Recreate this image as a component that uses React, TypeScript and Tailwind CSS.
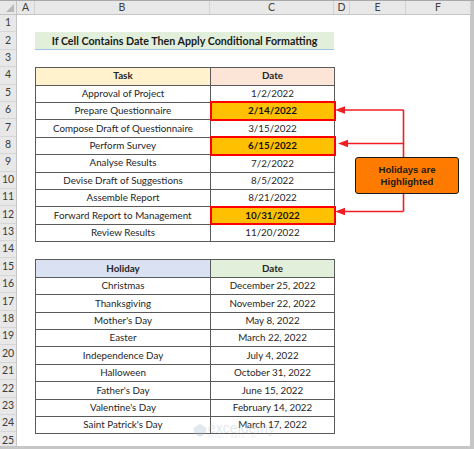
import React from 'react'

type Task = { name: string; date: string; hit?: boolean }

const tasks: Task[] = [
  { name: 'Approval of Project', date: '1/2/2022' },
  { name: 'Prepare Questionnaire', date: '2/14/2022', hit: true },
  { name: 'Compose Draft of Questionnaire', date: '3/15/2022' },
  { name: 'Perform Survey', date: '6/15/2022', hit: true },
  { name: 'Analyse Results', date: '7/2/2022' },
  { name: 'Devise Draft of Suggestions', date: '8/5/2022' },
  { name: 'Assemble Report', date: '8/21/2022' },
  { name: 'Forward Report to Management', date: '10/31/2022', hit: true },
  { name: 'Review Results', date: '11/20/2022' },
]

const holidays = [
  ['Christmas', 'December 25, 2022'],
  ['Thanksgiving', 'November 22, 2022'],
  ["Mother's Day", 'May 8, 2022'],
  ['Easter', 'March 22, 2022'],
  ['Independence Day', 'July 4, 2022'],
  ['Halloween', 'October 31, 2022'],
  ["Father's Day", 'June 15, 2022'],
  ["Valentine's Day", 'February 14, 2022'],
  ["Saint Patrick's Day", 'March 17, 2022'],
]

const cols = [
  { label: 'A', w: 'w-[18px]' },
  { label: 'B', w: 'w-[175px]' },
  { label: 'C', w: 'w-[124px]' },
  { label: 'D', w: 'w-[16px]' },
  { label: 'E', w: 'w-[56px]' },
  { label: 'F', w: 'w-[65px]' },
]

const cell = 'p-0 text-center border border-[#5a5a5a] leading-none whitespace-nowrap'

function Spacer() {
  return <div className="h-[17.4px]" />
}

export default function App() {
  return (
    <div className="relative w-[474px] h-[449px] overflow-hidden bg-white flex flex-col font-['Lato',sans-serif] text-[#262626]">
      {/* column headers */}
      <div className="flex h-[15px] shrink-0 bg-[#e8e8e8] border-t border-[#a8a8a8] border-b border-b-[#c4c4c4]">
        <div className="w-[17px] relative border-r border-[#c4c4c4]">
          <svg className="absolute right-[2px] bottom-[2px]" width="8" height="8" viewBox="0 0 8 8">
            <polygon points="8,0 8,8 0,8" fill="#b8b8b8" />
          </svg>
        </div>
        {cols.map((c) => (
          <div
            key={c.label}
            className={`${c.w} border-r border-[#d2d2d2] flex items-center justify-center text-[10.5px] text-[#404040]`}
          >
            {c.label}
          </div>
        ))}
        <div className="flex-1 bg-[#c6c6c6]" />
      </div>

      <div className="flex flex-1 min-h-0 overflow-hidden">
        {/* row numbers */}
        <div className="w-[17px] shrink-0 bg-[#e8e8e8] border-r border-[#c4c4c4] flex flex-col">
          {Array.from({ length: 25 }, (_, i) => (
            <div
              key={i}
              className="h-[17.4px] shrink-0 border-b border-[#d6d6d6] flex items-center justify-center text-[10.5px] text-[#3a3a3a]"
            >
              {i + 1}
            </div>
          ))}
        </div>

        {/* sheet area */}
        <div className="w-[453px] shrink-0 pl-[18px] flex flex-col">
          <Spacer />
          <div className="h-[17.4px] w-[299px] bg-[#e2efda] border-b border-[#9dc3e6] flex items-center justify-center text-[10.7px] font-bold text-[#1a1a1a]">
            If Cell Contains Date Then Apply Conditional Formatting
          </div>
          <Spacer />

          <table className="border-collapse table-fixed w-[299px] text-[9.8px]">
            <colgroup>
              <col className="w-[175px]" />
              <col className="w-[124px]" />
            </colgroup>
            <tbody>
              <tr className="h-[17.4px]">
                <td className={`${cell} bg-[#fff2cc] font-bold`}>Task</td>
                <td className={`${cell} bg-[#fce4d6] font-bold`}>Date</td>
              </tr>
              {tasks.map((t) => (
                <tr key={t.name} className="h-[17.4px]">
                  <td className={cell}>{t.name}</td>
                  <td
                    className={
                      t.hit
                        ? 'p-0 text-center leading-none border-2 border-[#ff0000] bg-[#ffc000] font-bold text-[#111]'
                        : cell
                    }
                  >
                    {t.date}
                  </td>
                </tr>
              ))}
            </tbody>
          </table>

          <Spacer />

          <table className="border-collapse table-fixed w-[299px] text-[9.8px]">
            <colgroup>
              <col className="w-[175px]" />
              <col className="w-[124px]" />
            </colgroup>
            <tbody>
              <tr className="h-[17.4px]">
                <td className={`${cell} bg-[#d9e1f2] font-bold`}>Holiday</td>
                <td className={`${cell} bg-[#e2efda] font-bold`}>Date</td>
              </tr>
              {holidays.map(([h, d]) => (
                <tr key={h} className="h-[17.4px]">
                  <td className={cell}>{h}</td>
                  <td className={cell}>{d}</td>
                </tr>
              ))}
            </tbody>
          </table>
        </div>

        <div className="flex-1 bg-[#c6c6c6]" />
      </div>

      <div className="h-[3px] shrink-0 bg-[#c6c6c6]" />

      {/* callout arrows */}
      <svg className="absolute left-0 top-0 pointer-events-none" width="474" height="449" viewBox="0 0 474 449">
        <g stroke="#f01e24" strokeWidth="1.6" fill="none">
          <path d="M403.5 110 V211.5" />
          <path d="M403.5 110 H344" />
          <path d="M403.5 143.5 H347" />
          <path d="M403.5 211.5 H344" />
        </g>
        <g fill="#f01e24">
          <polygon points="335,110 345,106.3 345,113.7" />
          <polygon points="338,143.5 348,139.8 348,147.2" />
          <polygon points="335,211.5 345,207.8 345,215.2" />
        </g>
      </svg>

      <div className="absolute left-[355px] top-[157px] w-[104px] h-[37px] rounded-[3px] border-[1.5px] border-[#1a1a1a] bg-[#ff7b00] flex flex-col items-center justify-center font-['Liberation_Sans',Arial,sans-serif] font-bold text-[9.6px] leading-[12px] text-[#1a1a1a]">
        <span>Holidays are</span>
        <span>Highlighted</span>
      </div>

      {/* watermark */}
      <div className="absolute left-[194px] top-[421px] flex items-center gap-[2px] opacity-30 pointer-events-none">
        <svg width="12" height="13" viewBox="0 0 12 13">
          <polygon points="6,0 12,3.5 12,9.5 6,13 0,9.5 0,3.5" fill="#9fb4c8" />
        </svg>
        <div className="flex flex-col leading-none">
          <span className="text-[14px] text-[#9fb4c8] font-['Liberation_Sans',sans-serif]">exceldemy</span>
          <span className="text-[4px] tracking-[1px] text-[#9fb4c8]">EXCEL · DATA · BI</span>
        </div>
      </div>
    </div>
  )
}
